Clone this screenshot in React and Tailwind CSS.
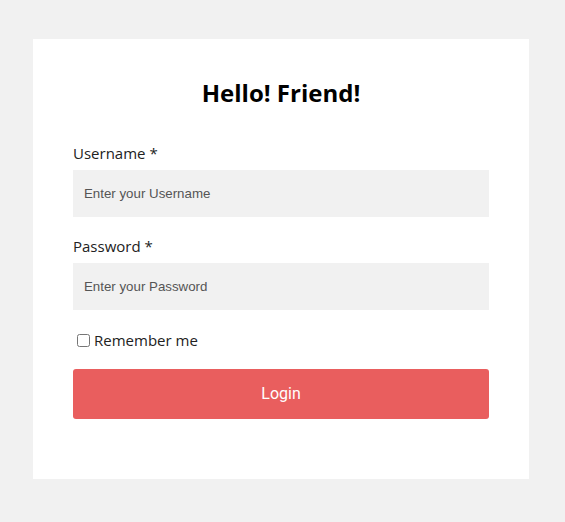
export default function App() {
  return (
    <div className="min-h-[522px] w-full bg-[#f1f1f1] pt-[39px] pl-[33px]">
      <div className="w-[496px] h-[440px] bg-white px-[40px] pt-[36px] font-['Open_Sans',sans-serif]">
        <h1 className="text-center text-[24px] leading-[36px] font-bold text-black">Hello! Friend!</h1>
        <div className="mt-[31px]">
          <label className="block text-[15px] leading-[22px] text-[#222]">Username *</label>
          <input
            className="mt-[6px] block w-full h-[47px] bg-[#f1f1f1] px-[11px] text-[13.3px] font-['Liberation_Sans',Arial,sans-serif] placeholder:text-[#555] outline-none"
            placeholder="Enter your Username"
          />
        </div>
        <div className="mt-[18px]">
          <label className="block text-[15px] leading-[22px] text-[#222]">Password *</label>
          <input
            type="password"
            className="mt-[6px] block w-full h-[47px] bg-[#f1f1f1] px-[11px] text-[13.3px] font-['Liberation_Sans',Arial,sans-serif] placeholder:text-[#555] outline-none"
            placeholder="Enter your Password"
          />
        </div>
        <label className="mt-[19px] flex items-center gap-[4px] pl-[4px] text-[15px] leading-[22px] text-[#222]">
          <input type="checkbox" className="w-[13px] h-[13px]" />
          Remember me
        </label>
        <button className="mt-[18px] w-full h-[50px] rounded-[3px] bg-[#e95e5e] text-white text-[16px] font-['Roboto',sans-serif]">
          Login
        </button>
      </div>
    </div>
  );
}
